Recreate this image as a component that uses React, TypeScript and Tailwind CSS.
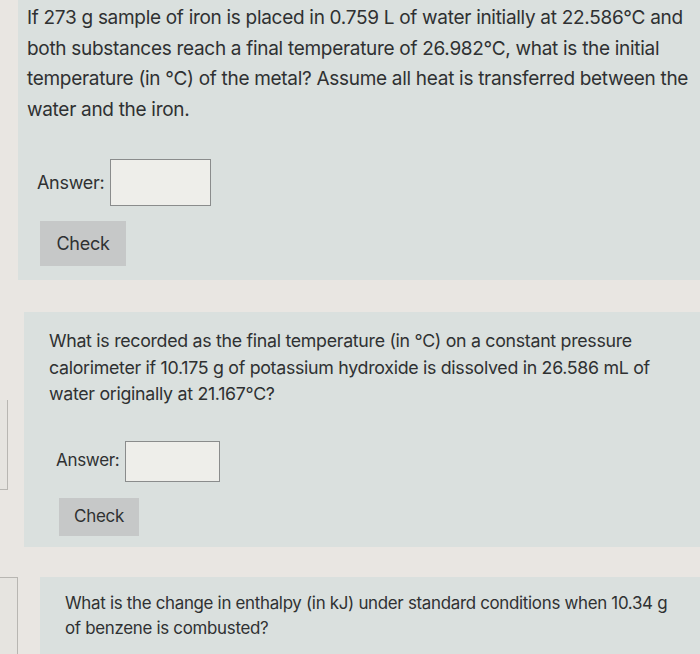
export default function App() {
  const font = { fontFamily: 'Inter, "Liberation Sans", Arial, sans-serif' };
  return (
    <div className="w-[700px] h-[654px] overflow-hidden bg-[#e9e6e2] text-[#2f3132]" style={font}>
      {/* Panel 1 */}
      <div className="pl-[18px]">
        <div className="h-[280px] bg-[#dae0de] pl-[9px] pt-[3px]">
          <p className="text-[19px] leading-[30.5px] tracking-[-0.3px] w-[670px]">
            If 273 g sample of iron is placed in 0.759 L of water initially at 22.586°C and both substances reach a final temperature of 26.982°C, what is the initial temperature (in °C) of the metal? Assume all heat is transferred between the water and the iron.
          </p>
          <div className="flex items-center mt-[34px] pl-[10px]">
            <span className="text-[18px] tracking-[-0.3px]">Answer:</span>
            <div className="ml-[6px] w-[101px] h-[47px] bg-[#eeeeea] border border-[#8a8c8c]" />
          </div>
          <div className="mt-[15px] ml-[13px] w-[86px] h-[45px] bg-[#c6c8c8] flex items-center justify-center text-[18px] tracking-[-0.3px]">
            Check
          </div>
        </div>
      </div>

      {/* Row 2 */}
      <div className="flex mt-[32px]">
        <div className="w-[24px] shrink-0">
          <div className="mt-[88px] w-[8px] h-[90px] border-r border-b border-[#b8b6b2] bg-[#e6e4e0]" />
        </div>
        <div className="flex-1 h-[235px] bg-[#dae0de] pl-[25px] pt-[16px]">
          <p className="text-[17.8px] leading-[26.5px] tracking-[-0.3px] w-[615px]">
            What is recorded as the final temperature (in °C) on a constant pressure calorimeter if 10.175 g of potassium hydroxide is dissolved in 26.586 mL of water originally at 21.167°C?
          </p>
          <div className="flex items-center mt-[33px] pl-[7px]">
            <span className="text-[17px] tracking-[-0.3px]">Answer:</span>
            <div className="ml-[6px] w-[95px] h-[41px] bg-[#eeeeea] border border-[#8a8c8c]" />
          </div>
          <div className="mt-[16px] ml-[10px] w-[80px] h-[38px] bg-[#c6c8c8] flex items-center justify-center text-[17px] tracking-[-0.3px]">
            Check
          </div>
        </div>
      </div>

      {/* Row 3 */}
      <div className="flex mt-[30px]">
        <div className="w-[40px] shrink-0">
          <div className="w-[18px] h-[80px] border-r border-t border-[#b8b6b2] bg-[#e6e4e0]" />
        </div>
        <div className="flex-1 h-[80px] bg-[#dae0de] pl-[25px] pt-[14px]">
          <p className="text-[16.9px] leading-[25px] tracking-[-0.3px] w-[612px]">
            What is the change in enthalpy (in kJ) under standard conditions when 10.34 g of benzene is combusted?
          </p>
        </div>
      </div>
    </div>
  );
}
